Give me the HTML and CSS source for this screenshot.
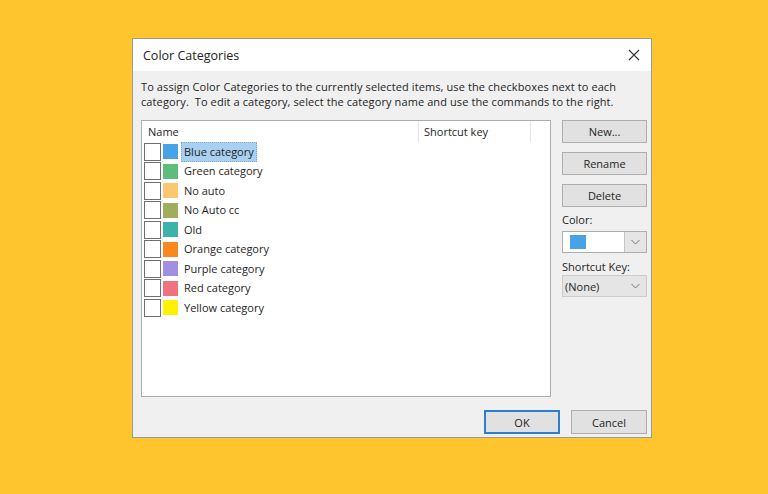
FILE: index.html
```html
<!DOCTYPE html>
<html lang="en">
<head>
    <meta charset="UTF-8">
    <meta name="viewport" content="width=device-width, initial-scale=1.0">
    <title>Color Categories</title>
    <link rel="stylesheet" href="styles.css">
</head>
<body>
    <div class="dialog">
        <div class="titlebar">
            <span class="title">Color Categories</span>
            <svg class="close" width="12" height="12" viewBox="0 0 12 12">
                <path d="M1 1 L11 11 M11 1 L1 11" stroke="#333" stroke-width="1.1" fill="none"/>
            </svg>
        </div>
        <div class="content">
            <p class="intro">To assign Color Categories to the currently selected items, use the checkboxes next to each category.&nbsp; To edit a category, select the category name and use the commands to the right.</p>
            <div class="main">
                <div class="listbox">
                    <div class="list-head">
                        <div class="col-name">Name</div>
                        <div class="col-key">Shortcut key</div>
                        <div class="col-rest"></div>
                    </div>
                    <ul class="cat-list">
                        <li class="cat"><span class="check"></span><span class="swatch swatch-blue"></span><span class="label selected">Blue category</span></li>
                        <li class="cat"><span class="check"></span><span class="swatch swatch-green"></span><span class="label">Green category</span></li>
                        <li class="cat"><span class="check"></span><span class="swatch swatch-peach"></span><span class="label">No auto</span></li>
                        <li class="cat"><span class="check"></span><span class="swatch swatch-olive"></span><span class="label">No Auto cc</span></li>
                        <li class="cat"><span class="check"></span><span class="swatch swatch-teal"></span><span class="label">Old</span></li>
                        <li class="cat"><span class="check"></span><span class="swatch swatch-orange"></span><span class="label">Orange category</span></li>
                        <li class="cat"><span class="check"></span><span class="swatch swatch-purple"></span><span class="label">Purple category</span></li>
                        <li class="cat"><span class="check"></span><span class="swatch swatch-red"></span><span class="label">Red category</span></li>
                        <li class="cat"><span class="check"></span><span class="swatch swatch-yellow"></span><span class="label">Yellow category</span></li>
                    </ul>
                </div>
                <div class="side">
                    <button class="btn">New...</button>
                    <button class="btn">Rename</button>
                    <button class="btn btn-last">Delete</button>
                    <div class="field-label">Color:</div>
                    <div class="combo combo-color">
                        <div class="combo-value"><span class="swatch swatch-blue"></span></div>
                        <div class="combo-arrow">
                            <svg width="9" height="6" viewBox="0 0 9 6"><path d="M0.5 1 L4.5 5 L8.5 1" stroke="#777" fill="none"/></svg>
                        </div>
                    </div>
                    <div class="field-label key-label">Shortcut Key:</div>
                    <div class="combo combo-key">
                        <div class="combo-value">(None)</div>
                        <div class="combo-arrow">
                            <svg width="9" height="6" viewBox="0 0 9 6"><path d="M0.5 1 L4.5 5 L8.5 1" stroke="#777" fill="none"/></svg>
                        </div>
                    </div>
                </div>
            </div>
            <div class="footer">
                <button class="btn btn-default">OK</button>
                <button class="btn">Cancel</button>
            </div>
        </div>
    </div>
</body>
</html>
```

FILE: styles.css
```css
* {
    margin: 0;
    padding: 0;
    box-sizing: border-box;
}

body {
    font-family: 'Open Sans', 'Noto Sans', sans-serif;
    font-size: 11px;
    color: #1e1e1e;
    background-color: #fec52f;
    padding: 38px 0 0 132px;
}

.dialog {
    width: 520px;
    height: 400px;
    background-color: #f0f0f0;
    border: 1px solid #9a9a9a;
    display: flex;
    flex-direction: column;
}

.titlebar {
    flex-shrink: 0;
    height: 32px;
    background-color: #ffffff;
    display: flex;
    align-items: center;
    justify-content: space-between;
    padding: 0 11px 0 10px;
}

.title {
    font-size: 12.5px;
    color: #222;
}

.content {
    flex: 1;
    padding: 8px 4px 4px 8px;
    display: flex;
    flex-direction: column;
}

.intro {
    line-height: 15px;
    letter-spacing: 0.1px;
}

.main {
    display: flex;
    gap: 11px;
    margin-top: 11px;
}

/* category list */
.listbox {
    width: 411px;
    height: 277px;
    background-color: #ffffff;
    border: 1px solid #acacac;
}

.list-head {
    display: flex;
    height: 21px;
    align-items: center;
}

.list-head > div {
    height: 100%;
    display: flex;
    align-items: center;
}

.col-name {
    width: 277px;
    padding-left: 6px;
    border-right: 1px solid #e5e5e5;
}

.col-key {
    width: 112px;
    padding-left: 5px;
    border-right: 1px solid #e5e5e5;
}

.cat-list {
    list-style: none;
    padding-left: 2px;
}

.cat {
    height: 19.5px;
    display: flex;
    align-items: center;
}

.check {
    width: 17px;
    height: 18px;
    background-color: #fff;
    border: 1px solid #6e6e6e;
    margin-right: 2px;
}

.swatch {
    display: inline-block;
    width: 15px;
    height: 15px;
}

.label {
    margin-left: 3px;
    padding: 1px 2px;
    line-height: 16px;
    border: 1px dotted transparent;
}

.label.selected {
    background-color: #a9d0f1;
    border-color: #7aa9d3;
}

.swatch-blue { background-color: #48a2e6; }
.swatch-green { background-color: #5ebd7b; }
.swatch-peach { background-color: #fbc771; }
.swatch-olive { background-color: #9fae5d; }
.swatch-teal { background-color: #3db3a8; }
.swatch-orange { background-color: #f8891d; }
.swatch-purple { background-color: #a38fe2; }
.swatch-red { background-color: #f0727f; }
.swatch-yellow { background-color: #fff200; }

/* right hand column */
.side {
    width: 85px;
    display: flex;
    flex-direction: column;
}

.btn {
    font-family: inherit;
    font-size: 11px;
    color: #1e1e1e;
    background-color: #e1e1e1;
    border: 1px solid #adadad;
    height: 23px;
    width: 85px;
    margin-bottom: 9px;
}

.btn-last {
    margin-bottom: 5px;
}

.field-label {
    line-height: 15px;
    margin-bottom: 4px;
}

.key-label {
    margin-bottom: 1px;
}

.combo {
    display: flex;
    height: 22px;
    border: 1px solid #adadad;
}

.combo-color {
    background-color: #ffffff;
    margin-bottom: 6px;
}

.combo-value {
    flex: 1;
    display: flex;
    align-items: center;
    padding-left: 7px;
}

.combo-arrow {
    width: 22px;
    display: flex;
    align-items: center;
    justify-content: center;
}

.combo-color .combo-arrow {
    background-color: #e5e5e5;
    border-left: 1px solid #c4c4c4;
}

.combo-color .swatch {
    width: 16px;
    height: 14px;
}

.combo-key {
    background-color: #e5e5e5;
    border-color: #cccccc;
}

.combo-key .combo-value {
    padding-left: 2px;
}

/* bottom buttons */
.footer {
    display: flex;
    justify-content: flex-end;
    gap: 11px;
    margin-top: 13px;
}

.footer .btn {
    width: 76px;
    height: 24px;
    margin: 0;
}

.btn-default {
    border: 2px solid #2a7fd4;
}
```
